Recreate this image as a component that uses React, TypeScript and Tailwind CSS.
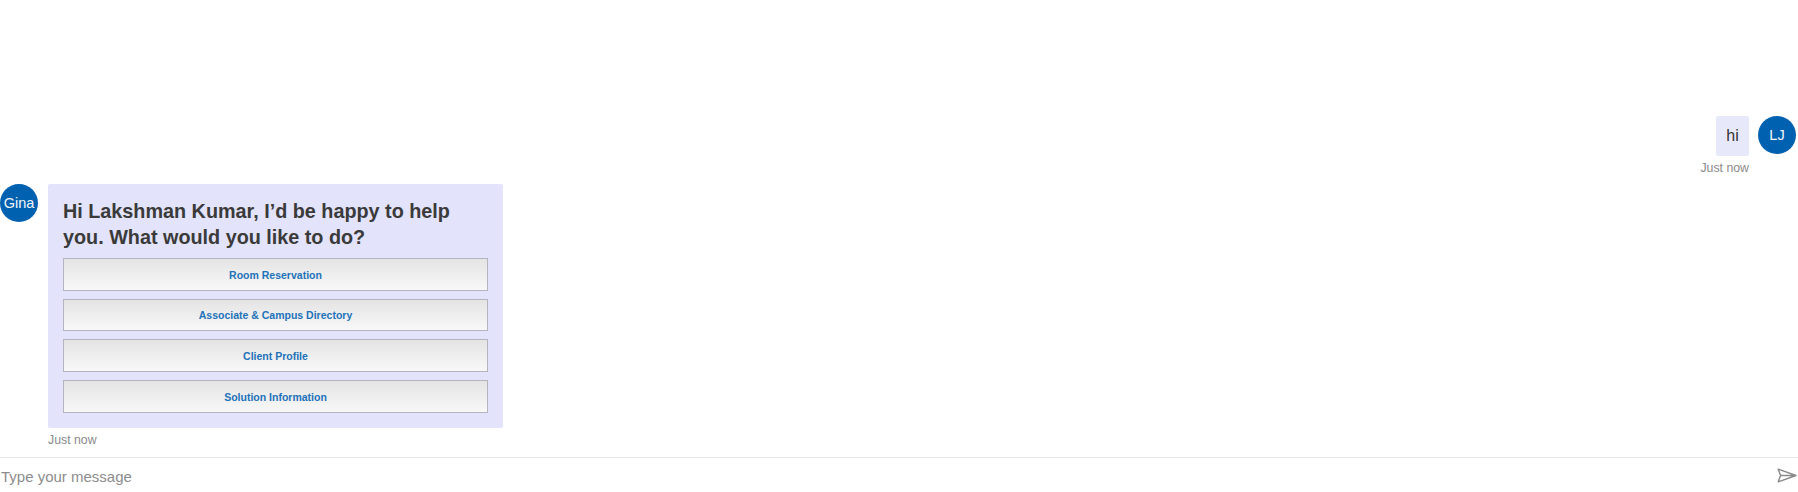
import React from "react";

const font = "font-['Liberation_Sans',Arial,sans-serif]";
const options = [
  "Room Reservation",
  "Associate & Campus Directory",
  "Client Profile",
  "Solution Information",
];

function Avatar({ label }: { label: string }) {
  return (
    <div className="flex h-[38px] w-[38px] shrink-0 items-center justify-center rounded-full bg-[#0061b0] pt-[1px] text-[14.5px] text-[#f2f6fb]">
      {label}
    </div>
  );
}

export default function App() {
  return (
    <div className={`${font} flex h-[492px] w-full flex-col justify-end overflow-hidden bg-white`}>
      <div className="flex flex-col pr-[2px]">
        {/* user message */}
        <div className="flex justify-end gap-[9px]">
          <div className="flex flex-col items-end">
            <div className="flex h-[40px] w-[33px] items-center justify-center rounded-[2px] bg-[#e8e8fb] text-[16px] text-[#333]">
              hi
            </div>
            <div className="mt-[4px] text-[12.3px] leading-[16px] text-[#8a8a8a]">Just now</div>
          </div>
          <Avatar label="LJ" />
        </div>

        {/* bot message */}
        <div className="mt-[8px] flex gap-[10px]">
          <Avatar label="Gina" />
          <div className="flex flex-col">
            <div className="w-[455px] rounded-[2px] bg-[#e3e3fb] pt-[15px] pr-[15px] pb-[15.3px] pl-[15px]">
              <div className="text-[19.8px] leading-[25.6px] font-bold text-[#3a3a3a]">
                Hi Lakshman Kumar, I’d be happy to help you. What would you like to do?
              </div>
              <div className="mt-[7.8px] flex flex-col gap-[8px]">
                {options.map((o) => (
                  <button
                    key={o}
                    className="h-[32.67px] w-full border border-[#b5b3bd] bg-gradient-to-b from-[#e4e4e4] to-[#f8f8f8] pt-[2px] text-[10.5px] font-bold text-[#2272b9]"
                  >
                    {o}
                  </button>
                ))}
              </div>
            </div>
            <div className="mt-[4px] text-[12.3px] leading-[16px] text-[#8a8a8a]">Just now</div>
          </div>
        </div>
      </div>

      {/* input bar */}
      <div className="mt-[9px] flex h-[35px] items-center justify-between border-t border-[#e8e8e8] pt-[4px]">
        <div className="pl-[1px] text-[15px] text-[#8c8c8c]">Type your message</div>
        <svg width="20" height="15" viewBox="0 0 20 15" fill="none" className="mr-[1px] mb-[3px]">
          <path d="M1.2 1.2 L19 7.5 L1.2 13.8 L3.6 7.5 Z M3.6 7.5 H19" stroke="#8a8a8a" strokeWidth="1.4" strokeLinejoin="round" />
        </svg>
      </div>
    </div>
  );
}
